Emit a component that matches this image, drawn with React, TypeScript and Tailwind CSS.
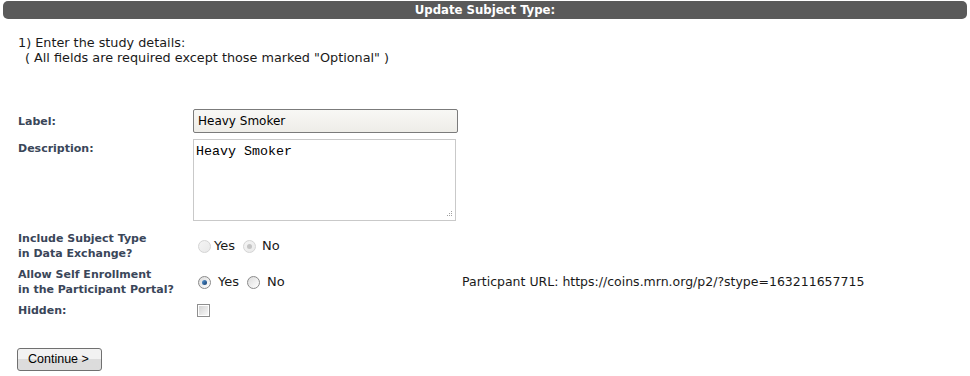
import React from "react";

const labelCls =
  "w-[193px] shrink-0 pl-[18px] text-[11px] font-bold leading-[15px] text-[#3a4659] [font-family:'DejaVu_Sans',Verdana,sans-serif]";

function Radio({ checked, disabled }: { checked?: boolean; disabled?: boolean }) {
  return (
    <span
      className={`inline-flex h-[13px] w-[13px] shrink-0 items-center justify-center rounded-full border ${
        disabled
          ? "border-[#d4d4d4] bg-gradient-to-br from-[#f4f4f4] to-[#e9e9e9]"
          : "border-[#8a8a8a] bg-gradient-to-br from-[#dcdcdc] to-[#ffffff]"
      }`}
    >
      {checked && (
        <span
          className={`h-[5px] w-[5px] rounded-full ${
            disabled ? "bg-[#c4c4c4]" : "bg-gradient-to-br from-[#5a9ad6] to-[#123c6e]"
          }`}
        />
      )}
    </span>
  );
}

export default function App() {
  return (
    <div className="relative h-[376px] w-[970px] overflow-hidden bg-white text-[#1a1a1a] [font-family:'DejaVu_Sans',Tahoma,sans-serif]">
      <div className="mx-[3px] mt-[1px] flex h-[18px] items-center justify-center rounded-[5px] bg-[#5a5a5a]">
        <span className="text-[13px] font-bold text-white [font-family:'DejaVu_Sans_Condensed','DejaVu_Sans',sans-serif]">
          Update Subject Type:
        </span>
      </div>

      <div className="mt-[16px] pl-[18px] text-[12.8px] leading-[15px]">
        <div>1) Enter the study details:</div>
        <div className="pl-[7px]">( All fields are required except those marked "Optional" )</div>
      </div>

      <div className="mt-[44px] flex flex-col">
        <div className="flex h-[24px] items-center">
          <div className={labelCls}>Label:</div>
          <div className="flex h-[24px] w-[265px] items-center rounded-[2px] border border-[#7b7b7b] bg-gradient-to-b from-[#f8f8f5] to-[#eeede8] pl-[4px] text-[12px] text-black">
            Heavy Smoker
          </div>
        </div>

        <div className="mt-[6px] flex h-[82px]">
          <div className={`${labelCls} pt-[2px]`}>Description:</div>
          <div className="relative h-[82px] w-[263px] border border-[#c9c9c9] bg-white pl-[2px] pt-[2px] text-[13.33px] text-black [font-family:'Liberation_Mono',monospace]">
            Heavy Smoker
            <svg className="absolute bottom-[2px] right-[2px]" width="8" height="8" viewBox="0 0 8 8">
              <rect x="6" y="1" width="1" height="1" fill="#a0a0a0" />
              <rect x="4" y="3" width="1" height="1" fill="#a0a0a0" />
              <rect x="6" y="3" width="1" height="1" fill="#a0a0a0" />
              <rect x="2" y="5" width="1" height="1" fill="#a0a0a0" />
              <rect x="4" y="5" width="1" height="1" fill="#a0a0a0" />
              <rect x="6" y="5" width="1" height="1" fill="#a0a0a0" />
            </svg>
          </div>
        </div>

        <div className="mt-[10px] flex h-[30px] items-center">
          <div className={labelCls}>
            Include Subject Type
            <br />
            in Data Exchange?
          </div>
          <div className="flex items-center pl-[5px] text-[13px]">
            <Radio disabled />
            <span className="ml-[3px] mr-[8px]">Yes</span>
            <Radio checked disabled />
            <span className="ml-[6px]">No</span>
          </div>
        </div>

        <div className="mt-[6px] flex h-[30px] items-center">
          <div className={labelCls}>
            Allow Self Enrollment
            <br />
            in the Participant Portal?
          </div>
          <div className="flex w-[269px] items-center pl-[5px] text-[13px]">
            <Radio checked />
            <span className="ml-[7px] mr-[8px]">Yes</span>
            <Radio />
            <span className="ml-[7px]">No</span>
          </div>
          <div className="text-[12.5px]">Particpant URL: https://coins.mrn.org/p2/?stype=163211657715</div>
        </div>

        <div className="mt-[6px] flex h-[15px] items-center">
          <div className={labelCls}>Hidden:</div>
          <span className="ml-[4px] flex h-[13px] w-[13px] items-center justify-center border border-[#8f8f8f] bg-white">
            <span className="h-[9px] w-[9px] bg-gradient-to-br from-[#d4d4d4] to-[#f8f8f8]" />
          </span>
        </div>
      </div>

      <div className="mt-[30px] pl-[17px]">
        <button className="flex h-[23px] w-[85px] items-center rounded-[3px] border border-[#707070] bg-gradient-to-b from-[#f2f2f2] from-50% to-[#dcdcdc] to-50% pl-[10px] text-[12.5px] text-black [font-family:'Liberation_Sans',Arial,sans-serif]">
          Continue &gt;
        </button>
      </div>
    </div>
  );
}
